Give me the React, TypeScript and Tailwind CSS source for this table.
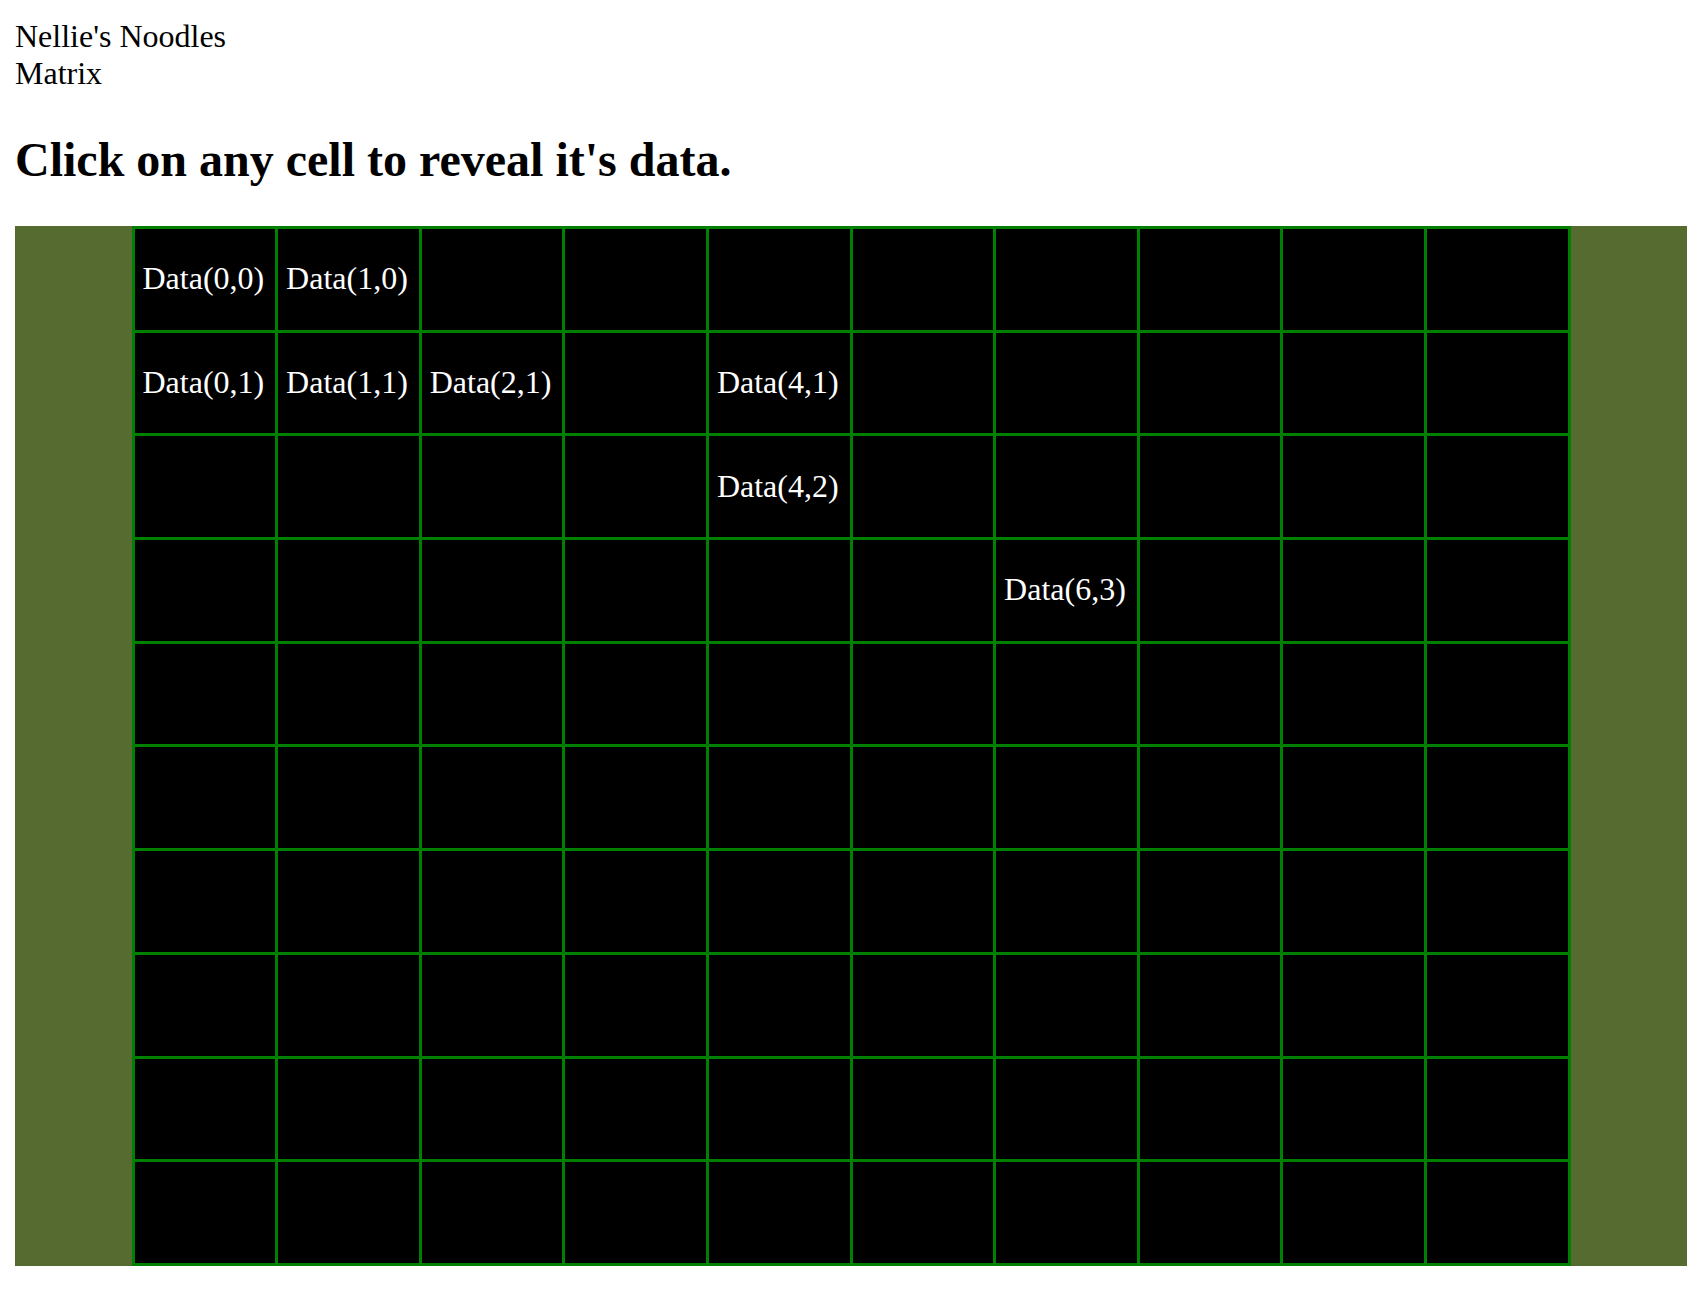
const revealed = ["0,0", "1,0", "0,1", "1,1", "2,1", "4,1", "4,2", "6,3"];

export default function App() {
  const rows = [...Array(10)].map((_, y) => y);
  const cols = [...Array(10)].map((_, x) => x);

  return (
    <div className="min-h-screen bg-white text-black font-['Liberation_Serif',serif] pl-[15px] pr-[13px] pt-[18px]">
      <div className="text-[32px] leading-[normal]">Nellie's Noodles</div>
      <div className="text-[32px] leading-[normal]">Matrix</div>

      <h1 className="text-[48px] font-bold leading-[normal] mt-[40px] mb-[39px]">
        Click on any cell to reveal it's data.
      </h1>

      {/* Matrix */}
      <div className="bg-[#556b2f] flex justify-center">
        <div className="grid grid-cols-10 gap-[3px] bg-[#008000] p-[3px] w-[1439px]">
          {rows.map((y) =>
            cols.map((x) => (
              <div
                key={`${x}-${y}`}
                className="bg-black h-[100.7px] flex items-center pl-[8px] pb-[1px] text-white text-[32px] leading-[normal] whitespace-nowrap cursor-pointer"
              >
                {revealed.includes(`${x},${y}`) ? `Data(${x},${y})` : ""}
              </div>
            ))
          )}
        </div>
      </div>
    </div>
  );
}
